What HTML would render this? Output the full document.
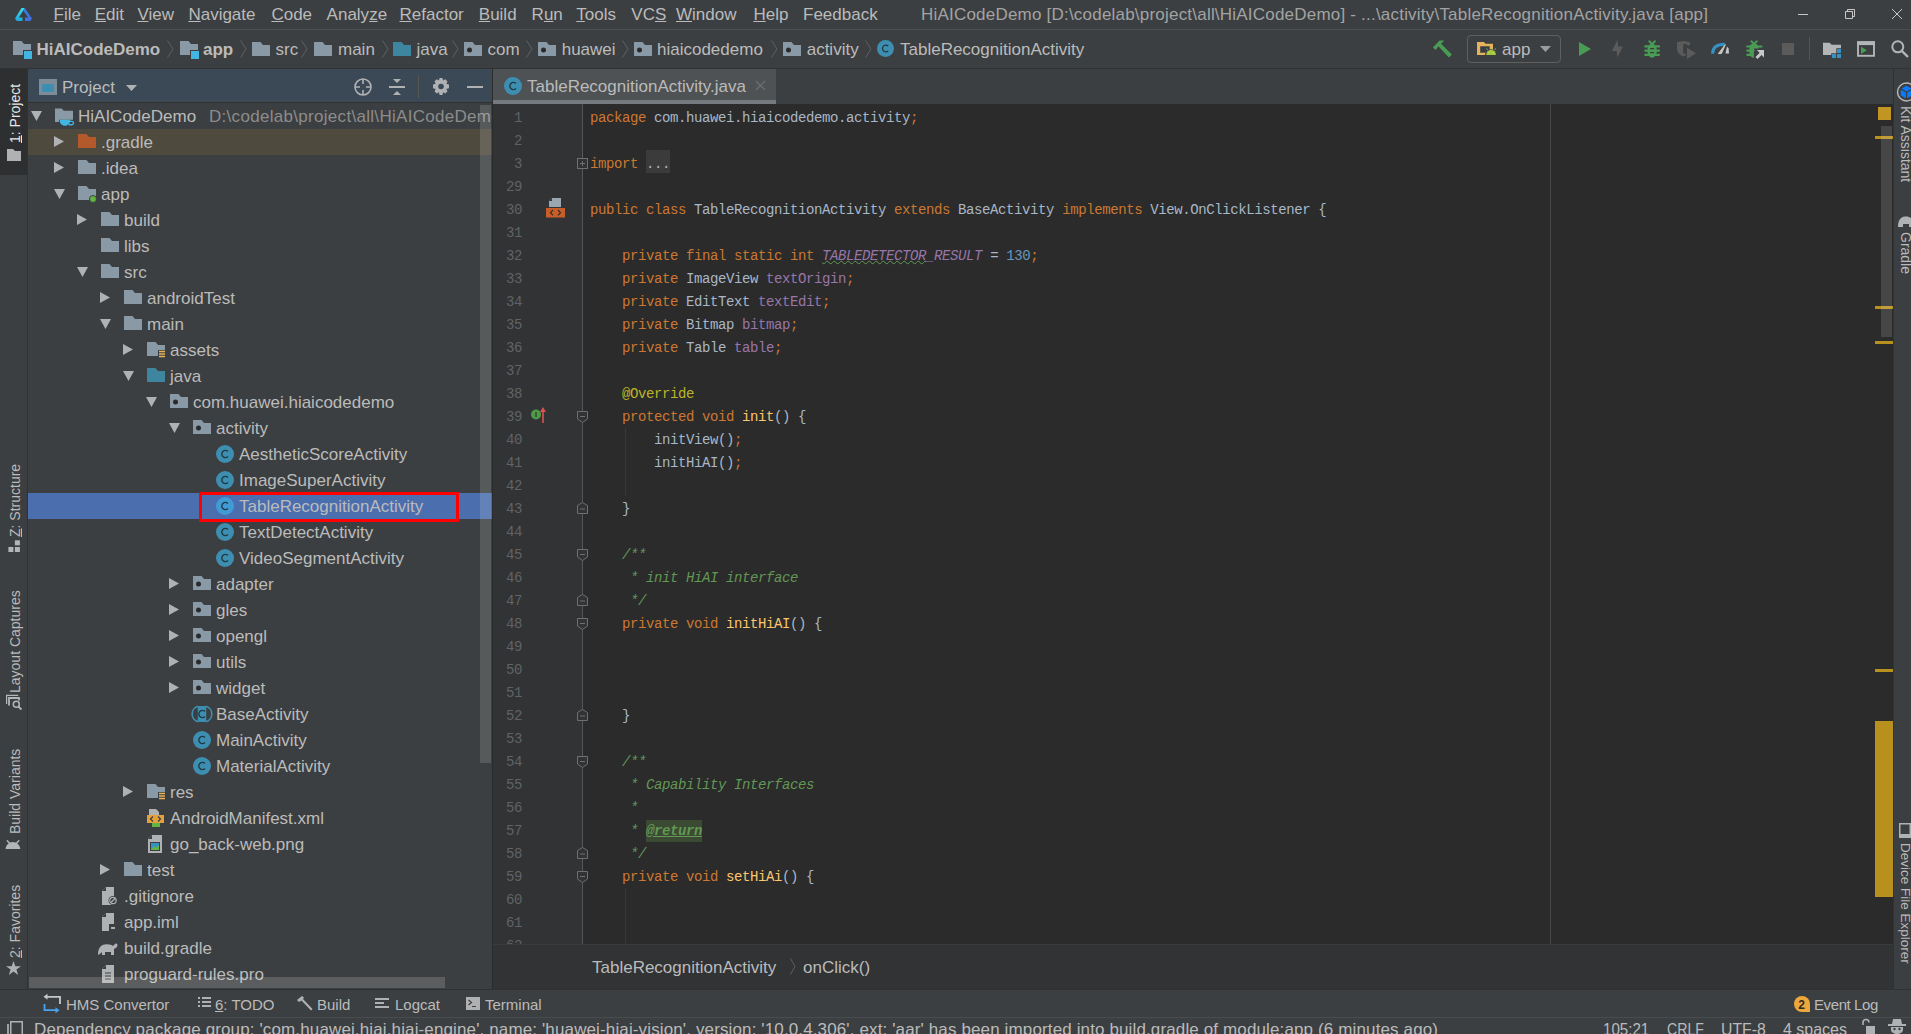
<!DOCTYPE html>
<html><head><meta charset="utf-8">
<style>
*{box-sizing:border-box;}
html,body{margin:0;padding:0;}
body{width:1911px;height:1034px;overflow:hidden;position:relative;background:#3C3F41;font-family:"Liberation Sans",sans-serif;color:#BBBBBB;font-size:17px;}
.a{position:absolute;}
.t{position:absolute;white-space:pre;}
.u{text-decoration:underline;text-underline-offset:1px;text-decoration-thickness:1px;}
svg{position:absolute;overflow:visible;}
.code{position:absolute;left:590px;font-family:"Liberation Mono",monospace;font-size:14px;letter-spacing:-0.4px;line-height:23px;white-space:pre;color:#A9B7C6;}
.ln{position:absolute;left:480px;width:42px;text-align:right;font-family:"Liberation Mono",monospace;font-size:14px;letter-spacing:-0.4px;line-height:23px;color:#606366;white-space:pre;}
.k{color:#CC7832;}
.f{color:#9876AA;font-style:italic;}
.fi{color:#9876AA;}
.n{color:#6897BB;}
.an{color:#BBB529;}
.dc{color:#629755;font-style:italic;}
.md{color:#FFC66D;}
.vt{position:absolute;white-space:pre;transform-origin:0 0;transform:rotate(-90deg);font-size:14px;line-height:16px;color:#BBBBBB;}
.vtr{position:absolute;white-space:pre;transform-origin:0 0;transform:rotate(90deg);font-size:14px;line-height:16px;color:#BBBBBB;}
</style></head><body>

<div class="a" style="left:0;top:29px;width:1911px;height:1px;background:#4F4F4F;"></div>
<svg style="left:15px;top:8px" width="17" height="13" viewBox="0 0 17 13"><defs><linearGradient id="lg1" x1="0" y1="0" x2="0" y2="1"><stop offset="0" stop-color="#3BE0E8"/><stop offset="1" stop-color="#1FA8DC"/></linearGradient><linearGradient id="lg2" x1="0" y1="0" x2="1" y2="1"><stop offset="0" stop-color="#2F7FE0"/><stop offset="1" stop-color="#4A6BE0"/></linearGradient></defs><path d="M6.5 0H9.8L3.8 9.5H7.5V13H1.8L0 10.5Z" fill="url(#lg1)"/><path d="M9.8 0L17 10.5L15.2 13H10V9.5H13.2L8.2 2.5Z" fill="url(#lg2)"/></svg>
<div class="t" style="left:53.5px;top:5px;font-size:17px;color:#BBBBBB;font-weight:400;line-height:20px;"><span class="u">F</span>ile</div>
<div class="t" style="left:94.7px;top:5px;font-size:17px;color:#BBBBBB;font-weight:400;line-height:20px;"><span class="u">E</span>dit</div>
<div class="t" style="left:137.4px;top:5px;font-size:17px;color:#BBBBBB;font-weight:400;line-height:20px;"><span class="u">V</span>iew</div>
<div class="t" style="left:188.4px;top:5px;font-size:17px;color:#BBBBBB;font-weight:400;line-height:20px;"><span class="u">N</span>avigate</div>
<div class="t" style="left:271.4px;top:5px;font-size:17px;color:#BBBBBB;font-weight:400;line-height:20px;"><span class="u">C</span>ode</div>
<div class="t" style="left:326.6px;top:5px;font-size:17px;color:#BBBBBB;font-weight:400;line-height:20px;">Analy<span class="u">z</span>e</div>
<div class="t" style="left:399.5px;top:5px;font-size:17px;color:#BBBBBB;font-weight:400;line-height:20px;"><span class="u">R</span>efactor</div>
<div class="t" style="left:478.8px;top:5px;font-size:17px;color:#BBBBBB;font-weight:400;line-height:20px;"><span class="u">B</span>uild</div>
<div class="t" style="left:531.6px;top:5px;font-size:17px;color:#BBBBBB;font-weight:400;line-height:20px;">R<span class="u">u</span>n</div>
<div class="t" style="left:576.3px;top:5px;font-size:17px;color:#BBBBBB;font-weight:400;line-height:20px;"><span class="u">T</span>ools</div>
<div class="t" style="left:631.3px;top:5px;font-size:17px;color:#BBBBBB;font-weight:400;line-height:20px;">VC<span class="u">S</span></div>
<div class="t" style="left:676px;top:5px;font-size:17px;color:#BBBBBB;font-weight:400;line-height:20px;"><span class="u">W</span>indow</div>
<div class="t" style="left:753.4px;top:5px;font-size:17px;color:#BBBBBB;font-weight:400;line-height:20px;"><span class="u">H</span>elp</div>
<div class="t" style="left:803px;top:5px;font-size:17px;color:#BBBBBB;font-weight:400;line-height:20px;">Feedback</div>
<div class="t" style="left:921px;top:5px;font-size:17px;color:#A3A3A3;font-weight:400;line-height:20px;letter-spacing:0.21px;">HiAICodeDemo [D:\codelab\project\all\HiAICodeDemo] - ...\activity\TableRecognitionActivity.java [app]</div>
<div class="a" style="left:1798px;top:14px;width:10px;height:1px;background:#C8C8C8;"></div>
<svg style="left:1845px;top:9px" width="10" height="10" viewBox="0 0 10 10"><path d="M0.5 2.5H7.5V9.5H0.5Z M2.5 2.5V0.5H9.5V7.5H7.5" stroke="#C8C8C8" stroke-width="1" fill="none"/></svg>
<svg style="left:1892px;top:9px" width="10" height="10" viewBox="0 0 10 10"><path d="M0 0L10 10M10 0L0 10" stroke="#C8C8C8" stroke-width="1"/></svg>
<div class="a" style="left:0;top:68px;width:1911px;height:1px;background:#323232;"></div>
<svg style="left:13px;top:41px" width="18" height="14" viewBox="0 0 18 14"><path d="M0 0H8.5L11 3H18V14H0Z" fill="#8A99A6"/></svg><div class="a" style="left:23px;top:50px;width:10px;height:10px;background:#3C3F41;"></div><div class="a" style="left:24px;top:51px;width:8px;height:8px;background:#40B6E0;"></div>
<div class="t" style="left:36.5px;top:40px;font-size:17px;color:#BBBBBB;font-weight:700;line-height:20px;">HiAICodeDemo</div>
<svg style="left:167px;top:40px" width="7" height="18" viewBox="0 0 7 18"><path d="M0.5 0.5L6 9L0.5 17.5" stroke="#5E6163" stroke-width="1" fill="none"/></svg>
<svg style="left:180px;top:41px" width="18" height="14" viewBox="0 0 18 14"><path d="M0 0H8.5L11 3H18V14H0Z" fill="#8A99A6"/></svg><div class="a" style="left:190px;top:50px;width:10px;height:10px;background:#3C3F41;"></div><div class="a" style="left:191px;top:51px;width:8px;height:8px;background:#40B6E0;"></div>
<div class="t" style="left:203px;top:40px;font-size:17px;color:#BBBBBB;font-weight:700;line-height:20px;">app</div>
<svg style="left:240px;top:40px" width="7" height="18" viewBox="0 0 7 18"><path d="M0.5 0.5L6 9L0.5 17.5" stroke="#5E6163" stroke-width="1" fill="none"/></svg>
<svg style="left:252px;top:42px" width="18" height="14" viewBox="0 0 18 14"><path d="M0 0H8.5L11 3H18V14H0Z" fill="#8A99A6"/></svg>
<div class="t" style="left:275.5px;top:40px;font-size:17px;color:#BBBBBB;font-weight:400;line-height:20px;">src</div>
<svg style="left:301px;top:40px" width="7" height="18" viewBox="0 0 7 18"><path d="M0.5 0.5L6 9L0.5 17.5" stroke="#5E6163" stroke-width="1" fill="none"/></svg>
<svg style="left:314px;top:42px" width="18" height="14" viewBox="0 0 18 14"><path d="M0 0H8.5L11 3H18V14H0Z" fill="#8A99A6"/></svg>
<div class="t" style="left:338px;top:40px;font-size:17px;color:#BBBBBB;font-weight:400;line-height:20px;">main</div>
<svg style="left:382px;top:40px" width="7" height="18" viewBox="0 0 7 18"><path d="M0.5 0.5L6 9L0.5 17.5" stroke="#5E6163" stroke-width="1" fill="none"/></svg>
<svg style="left:393px;top:42px" width="18" height="14" viewBox="0 0 18 14"><path d="M0 0H8.5L11 3H18V14H0Z" fill="#3E86A0"/></svg>
<div class="t" style="left:416.6px;top:40px;font-size:17px;color:#BBBBBB;font-weight:400;line-height:20px;">java</div>
<svg style="left:452px;top:40px" width="7" height="18" viewBox="0 0 7 18"><path d="M0.5 0.5L6 9L0.5 17.5" stroke="#5E6163" stroke-width="1" fill="none"/></svg>
<svg style="left:464px;top:42px" width="18" height="14" viewBox="0 0 18 14"><path d="M0 0H8.5L11 3H18V14H0Z" fill="#8A99A6"/><circle cx="5.5" cy="8" r="2.5" fill="#2B2B2B"/></svg>
<div class="t" style="left:487.6px;top:40px;font-size:17px;color:#BBBBBB;font-weight:400;line-height:20px;">com</div>
<svg style="left:526px;top:40px" width="7" height="18" viewBox="0 0 7 18"><path d="M0.5 0.5L6 9L0.5 17.5" stroke="#5E6163" stroke-width="1" fill="none"/></svg>
<svg style="left:538px;top:42px" width="18" height="14" viewBox="0 0 18 14"><path d="M0 0H8.5L11 3H18V14H0Z" fill="#8A99A6"/><circle cx="5.5" cy="8" r="2.5" fill="#2B2B2B"/></svg>
<div class="t" style="left:561.7px;top:40px;font-size:17px;color:#BBBBBB;font-weight:400;line-height:20px;">huawei</div>
<svg style="left:622px;top:40px" width="7" height="18" viewBox="0 0 7 18"><path d="M0.5 0.5L6 9L0.5 17.5" stroke="#5E6163" stroke-width="1" fill="none"/></svg>
<svg style="left:634px;top:42px" width="18" height="14" viewBox="0 0 18 14"><path d="M0 0H8.5L11 3H18V14H0Z" fill="#8A99A6"/><circle cx="5.5" cy="8" r="2.5" fill="#2B2B2B"/></svg>
<div class="t" style="left:657px;top:40px;font-size:17px;color:#BBBBBB;font-weight:400;line-height:20px;">hiaicodedemo</div>
<svg style="left:771px;top:40px" width="7" height="18" viewBox="0 0 7 18"><path d="M0.5 0.5L6 9L0.5 17.5" stroke="#5E6163" stroke-width="1" fill="none"/></svg>
<svg style="left:783px;top:42px" width="18" height="14" viewBox="0 0 18 14"><path d="M0 0H8.5L11 3H18V14H0Z" fill="#8A99A6"/><circle cx="5.5" cy="8" r="2.5" fill="#2B2B2B"/></svg>
<div class="t" style="left:806.7px;top:40px;font-size:17px;color:#BBBBBB;font-weight:400;line-height:20px;">activity</div>
<svg style="left:865px;top:40px" width="7" height="18" viewBox="0 0 7 18"><path d="M0.5 0.5L6 9L0.5 17.5" stroke="#5E6163" stroke-width="1" fill="none"/></svg>
<svg style="left:877px;top:40px" width="17" height="17" viewBox="0 0 17 17"><circle cx="8.5" cy="8.5" r="8.5" fill="#3D8EB0"/><path d="M11.3 6.1A3.4 3.4 0 1 0 11.3 10.9" stroke="#203A45" stroke-width="1.3" fill="none"/></svg>
<div class="t" style="left:900px;top:40px;font-size:17px;color:#BBBBBB;font-weight:400;line-height:20px;">TableRecognitionActivity</div>
<svg style="left:1433px;top:40px" width="20" height="18" viewBox="0 0 20 18"><path d="M-0.1 7.4L6.6 0.4H11.3L8 3.7L18.9 14.6L15.9 17.6L5.4 6.3L2.7 9.9Z" fill="#499C54"/></svg>
<div class="a" style="left:1467px;top:35px;width:94px;height:28px;border:1px solid #5E6060;border-radius:4px;"></div>
<svg style="left:1477px;top:42px" width="20" height="14" viewBox="0 0 20 14"><path fill-rule="evenodd" d="M0 0H7L8.5 1.8H16V13H0Z M3.2 4.3H12.7V10.7H3.2Z" fill="#E4B35A"/><path d="M8.6 13.3A5.3 5.5 0 0 1 19.2 13.3Z" fill="#3C3F41" stroke="#3C3F41" stroke-width="1.2"/><path d="M9.2 13A4.9 5.2 0 0 1 19 13Z" fill="#A4C639"/><path d="M10.6 8.3L9.6 6.3M17.6 8.3L18.6 6.3" stroke="#5FB87A" stroke-width="0.9"/><circle cx="12.1" cy="10.8" r="0.8" fill="#C8DC8C"/><circle cx="16.2" cy="10.8" r="0.8" fill="#C8DC8C"/></svg>
<div class="t" style="left:1502px;top:40px;font-size:17px;color:#BBBBBB;font-weight:400;line-height:20px;">app</div>
<svg style="left:1540px;top:46px" width="11" height="6" viewBox="0 0 11 6"><path d="M0 0H11L5.5 6Z" fill="#9A9DA0"/></svg>
<svg style="left:1579px;top:42px" width="12" height="14" viewBox="0 0 12 14"><path d="M0 0L12 7L0 14Z" fill="#499C54"/></svg>
<svg style="left:1606px;top:36px" width="30" height="24" viewBox="0 0 30 24"><path d="M11.5 3.9L5.9 15.1H10.7L11.4 21.6L16.9 10.4H12.1Z" fill="#5B5B5B"/></svg>
<svg style="left:1644px;top:40px" width="16" height="18" viewBox="0 0 16 18"><path d="M5.3 1.3L7.6 3.6M10.9 1.3L8.6 3.6" stroke="#499C54" stroke-width="2" stroke-linecap="round"/><ellipse cx="8.1" cy="10.7" rx="4.7" ry="7.1" fill="#499C54"/><path d="M1.2 6.4H15M1.2 10.6H15M1.2 14.8H15" stroke="#499C54" stroke-width="2.2" stroke-linecap="round"/><path d="M6 8.6H10.2M6 12.6H10.2" stroke="#3C3F41" stroke-width="1.2"/></svg>
<svg style="left:1677px;top:41px" width="20" height="19" viewBox="0 0 20 19"><path d="M0 1.3L6.5 0L13 1.3V4.5H10V3H6.2V12.5H8.8V14.3C7.8 14.9 6.8 15.4 6.2 15.4C2.5 14 0 11 0 7.5Z" fill="#5B5B5B"/><path d="M10 6.8L19 12.3L10 18Z" fill="#5B5B5B"/></svg>
<svg style="left:1706px;top:36px" width="30" height="24" viewBox="0 0 30 24"><path d="M6.6 17.8C6.6 12 9.5 8.3 18.8 8.3" stroke="#3592C4" stroke-width="3" fill="none"/><path d="M12.4 17.6L19.3 8.6L15.4 17.6Z" fill="#C8C8C8" stroke="#C8C8C8" stroke-width="1" stroke-linejoin="round"/><path d="M19.5 17.6H23L22.6 12.5L21 10.5Z" fill="#C8C8C8"/></svg>
<svg style="left:1742px;top:36px" width="30" height="24" viewBox="0 0 30 24"><path d="M9.3 5.3L11.7 7.4M14.9 5.3L12.4 7.4" stroke="#499C54" stroke-width="2" stroke-linecap="round"/><path d="M7.4 12.5C7.4 9 9.3 7.4 12 7.4C14.5 7.4 16.5 9 16.6 12.5H11.9V21.8C9 21.8 7.4 19 7.4 15Z" fill="#499C54"/><path d="M5.2 10.5H19.5M5.2 14.6H11.5M5.2 18.8H11" stroke="#499C54" stroke-width="2.2" stroke-linecap="round"/><path d="M14.9 13.9H22V21.6Z" fill="#C8C8C8"/><path d="M14.5 22L19.5 17" stroke="#C8C8C8" stroke-width="3"/></svg>
<div class="a" style="left:1782px;top:43px;width:12px;height:12px;background:#5B5B5B;"></div>
<div class="a" style="left:1809px;top:37px;width:1px;height:23px;background:#515658;"></div>
<svg style="left:1818px;top:36px" width="30" height="24" viewBox="0 0 30 24"><path d="M5 6.7H11.6L13.7 8.8H23V12.3H18.3V17.3H13.2V19H5Z" fill="#B4B5B7"/><rect x="19" y="13" width="4" height="4" fill="#3592C4"/><rect x="13.9" y="18" width="4.1" height="4" fill="#3592C4"/><rect x="19" y="18" width="4" height="4" fill="#3592C4"/></svg>
<svg style="left:1852px;top:36px" width="30" height="24" viewBox="0 0 30 24"><rect x="6" y="6.2" width="16" height="13.6" stroke="#B4B5B7" stroke-width="1.9" fill="none"/><rect x="5.1" y="5.3" width="17.8" height="3.8" fill="#B4B5B7"/><path d="M9 10.7L14.9 14.3L9 17.9Z" fill="#499C54"/></svg>
<svg style="left:1891px;top:40px" width="18" height="18" viewBox="0 0 18 18"><circle cx="6.8" cy="6.8" r="5.5" stroke="#B4B5B7" stroke-width="2" fill="none"/><path d="M10.8 10.8L17 17" stroke="#B4B5B7" stroke-width="2.4"/></svg>
<div class="a" style="left:27px;top:69px;width:1px;height:920px;background:#2F3133;"></div>
<div class="a" style="left:0;top:69px;width:27px;height:106px;background:#2D2F31;"></div>
<div class="vt" style="left:7px;top:143px;"><span style="color:#E8E8E8"><span class="u">1</span>: Project</span></div>
<svg style="left:7px;top:149px" width="14" height="12" viewBox="0 0 14 12"><path d="M0 0H6L8 2H14V12H0Z" fill="#AFB1B3"/></svg>
<div class="vt" style="left:7px;top:537px;"><span class="u">Z</span>: Structure</div>
<svg style="left:0px;top:530px" width="28" height="30" viewBox="0 0 28 30"><rect x="14.9" y="10.3" width="5" height="5" fill="#B4B5B7"/><rect x="8.4" y="17" width="5" height="5" fill="#B4B5B7"/><rect x="14.9" y="17" width="5" height="5" fill="#B4B5B7"/></svg>
<div class="vt" style="left:7px;top:693px;">Layout Captures</div>
<svg style="left:0px;top:688px" width="28" height="28" viewBox="0 0 28 28"><path d="M6.6 16V7.3H18.2" stroke="#B4B5B7" stroke-width="1.2" fill="none"/><path d="M9 17.5V10H19V12.5" stroke="#B4B5B7" stroke-width="1.8" fill="none"/><circle cx="16.3" cy="16.3" r="3" stroke="#B4B5B7" stroke-width="1.5" fill="#3C3F41"/><path d="M18.3 18.5L21.5 21.5" stroke="#B4B5B7" stroke-width="1.8"/></svg>
<div class="vt" style="left:7px;top:834px;">Build Variants</div>
<svg style="left:0px;top:832px" width="28" height="26" viewBox="0 0 28 26"><path d="M5.5 17C6 13 9 10 12.9 10C16.8 10 19.8 13 20.3 17Z" fill="#B4B5B7"/><path d="M7.3 8.7L9.6 11.2M18.8 8.7L16.4 11.2" stroke="#B4B5B7" stroke-width="1.5" stroke-linecap="round"/></svg>
<div class="vt" style="left:7px;top:958px;"><span class="u">2</span>: Favorites</div>
<svg style="left:6px;top:961px" width="15" height="15" viewBox="0 0 15 15"><path d="M7.5 0L9.3 5.2H15L10.4 8.5L12.2 14L7.5 10.6L2.8 14L4.6 8.5L0 5.2H5.7Z" fill="#AFB1B3"/></svg>
<div class="a" style="left:28px;top:69px;width:464px;height:33px;background:#3B4856;"></div>
<div class="a" style="left:28px;top:102px;width:464px;height:1px;background:#323232;"></div>
<div class="a" style="left:492px;top:69px;width:1px;height:920px;background:#2B2B2B;"></div>
<svg style="left:39px;top:79px" width="18" height="16" viewBox="0 0 18 16"><rect x="0.8" y="0.8" width="16.4" height="14.4" stroke="#7E8C98" stroke-width="1.6" fill="#7E8C98"/><rect x="3" y="5" width="12" height="8" fill="#3D8EB0"/></svg>
<div class="t" style="left:62px;top:78px;font-size:17px;color:#BBBBBB;font-weight:400;line-height:20px;">Project</div>
<svg style="left:126px;top:85px" width="11" height="6" viewBox="0 0 11 6"><path d="M0 0H11L5.5 6Z" fill="#AFB1B3"/></svg>
<svg style="left:354px;top:78px" width="18" height="18" viewBox="0 0 18 18"><circle cx="9" cy="9" r="8" stroke="#AFB1B3" stroke-width="1.6" fill="none"/><path d="M9 1V6M9 12V17M1 9H6M12 9H17" stroke="#AFB1B3" stroke-width="1.6"/></svg>
<svg style="left:389px;top:79px" width="16" height="16" viewBox="0 0 16 16"><path d="M4 0H12L8 4Z M4 16H12L8 12Z" fill="#AFB1B3"/><rect x="0" y="7" width="16" height="2" fill="#AFB1B3"/></svg>
<div class="a" style="left:418px;top:75px;width:1px;height:23px;background:#5A5650;"></div>
<svg style="left:433px;top:78px" width="16" height="17" viewBox="0 0 16 17"><path d="M6.5 0H9.5L10 2.5L12.3 1.2L14.5 3.5L13.3 5.8L16 6.5V10.2L13.3 11L14.5 13.3L12.3 15.5L10 14.3L9.5 17H6.5L6 14.3L3.7 15.5L1.5 13.3L2.7 11L0 10.2V6.5L2.7 5.8L1.5 3.5L3.7 1.2L6 2.5Z" fill="#AFB1B3"/><circle cx="8" cy="8.5" r="2.8" fill="#3B4856"/></svg>
<div class="a" style="left:467px;top:86px;width:16px;height:2px;background:#AFB1B3;"></div>
<div class="a" style="left:28px;top:103px;width:464px;height:886px;overflow:hidden;">
<div class="a" style="left:0;top:26px;width:464px;height:26px;background:#4E4A3E;"></div><div class="a" style="left:0;top:390px;width:464px;height:26px;background:#4B6EAF;"></div><svg style="left:3px;top:8px" width="11" height="10" viewBox="0 0 11 10"><path d="M0 0H11L5.5 10Z" fill="#AFB1B3"/></svg><svg style="left:22px;top:1px" width="30" height="24" viewBox="0 0 30 24"><path d="M5 4.4H11.6L13.8 6.8H23V15.8H9V17.9H5Z" fill="#8A99A6"/><path d="M9.75 15.8H20.2V17C20.2 20 17.5 21.8 15 21.8C12.5 21.8 9.75 20 9.75 17Z" fill="#40B6E0"/><path d="M19.5 17.4H21.8A1.7 1.7 0 0 1 21.8 20.8H18.8" stroke="#40B6E0" stroke-width="1.4" fill="none"/></svg><div class="t" style="left:50px;top:1px;line-height:26px;">HiAICodeDemo</div><div class="t" style="left:181px;top:1px;line-height:26px;color:#8C8C8C;letter-spacing:0.3px;">D:\codelab\project\all\HiAICodeDemo</div><svg style="left:26px;top:33px" width="10" height="11" viewBox="0 0 10 11"><path d="M0 0L10 5.5L0 11Z" fill="#AFB1B3"/></svg><svg style="left:50px;top:31px" width="18" height="14" viewBox="0 0 18 14"><path d="M0 0H8.5L11 3H18V14H0Z" fill="#B4592C"/></svg><div class="t" style="left:73px;top:27px;line-height:26px;">.gradle</div><svg style="left:26px;top:59px" width="10" height="11" viewBox="0 0 10 11"><path d="M0 0L10 5.5L0 11Z" fill="#AFB1B3"/></svg><svg style="left:50px;top:57px" width="18" height="14" viewBox="0 0 18 14"><path d="M0 0H8.5L11 3H18V14H0Z" fill="#8A99A6"/></svg><div class="t" style="left:73px;top:53px;line-height:26px;">.idea</div><svg style="left:26px;top:86px" width="11" height="10" viewBox="0 0 11 10"><path d="M0 0H11L5.5 10Z" fill="#AFB1B3"/></svg><svg style="left:50px;top:83px" width="18" height="14" viewBox="0 0 18 14"><path d="M0 0H8.5L11 3H18V14H0Z" fill="#8A99A6"/></svg><svg style="left:61px;top:92px" width="8" height="8" viewBox="0 0 8 8"><circle cx="4" cy="4" r="3.5" fill="#62B543" stroke="#3C3F41" stroke-width="1"/></svg><div class="t" style="left:73px;top:79px;line-height:26px;">app</div><svg style="left:49px;top:111px" width="10" height="11" viewBox="0 0 10 11"><path d="M0 0L10 5.5L0 11Z" fill="#AFB1B3"/></svg><svg style="left:73px;top:109px" width="18" height="14" viewBox="0 0 18 14"><path d="M0 0H8.5L11 3H18V14H0Z" fill="#8A99A6"/></svg><div class="t" style="left:96px;top:105px;line-height:26px;">build</div><svg style="left:73px;top:135px" width="18" height="14" viewBox="0 0 18 14"><path d="M0 0H8.5L11 3H18V14H0Z" fill="#8A99A6"/></svg><div class="t" style="left:96px;top:131px;line-height:26px;">libs</div><svg style="left:49px;top:164px" width="11" height="10" viewBox="0 0 11 10"><path d="M0 0H11L5.5 10Z" fill="#AFB1B3"/></svg><svg style="left:73px;top:161px" width="18" height="14" viewBox="0 0 18 14"><path d="M0 0H8.5L11 3H18V14H0Z" fill="#8A99A6"/></svg><div class="t" style="left:96px;top:157px;line-height:26px;">src</div><svg style="left:72px;top:189px" width="10" height="11" viewBox="0 0 10 11"><path d="M0 0L10 5.5L0 11Z" fill="#AFB1B3"/></svg><svg style="left:96px;top:187px" width="18" height="14" viewBox="0 0 18 14"><path d="M0 0H8.5L11 3H18V14H0Z" fill="#8A99A6"/></svg><div class="t" style="left:119px;top:183px;line-height:26px;">androidTest</div><svg style="left:72px;top:216px" width="11" height="10" viewBox="0 0 11 10"><path d="M0 0H11L5.5 10Z" fill="#AFB1B3"/></svg><svg style="left:96px;top:213px" width="18" height="14" viewBox="0 0 18 14"><path d="M0 0H8.5L11 3H18V14H0Z" fill="#8A99A6"/></svg><div class="t" style="left:119px;top:209px;line-height:26px;">main</div><svg style="left:95px;top:241px" width="10" height="11" viewBox="0 0 10 11"><path d="M0 0L10 5.5L0 11Z" fill="#AFB1B3"/></svg><svg style="left:119px;top:239px" width="18" height="14" viewBox="0 0 18 14"><path d="M0 0H8.5L11 3H18V14H0Z" fill="#8A99A6"/></svg><svg style="left:130px;top:247px" width="8" height="9" viewBox="0 0 8 9"><rect x="0" y="0" width="8" height="9" fill="#3C3F41"/><path d="M1 1.5H7M1 4H7M1 6.5H7" stroke="#E4B35A" stroke-width="1.3"/></svg><div class="t" style="left:142px;top:235px;line-height:26px;">assets</div><svg style="left:95px;top:268px" width="11" height="10" viewBox="0 0 11 10"><path d="M0 0H11L5.5 10Z" fill="#AFB1B3"/></svg><svg style="left:119px;top:265px" width="18" height="14" viewBox="0 0 18 14"><path d="M0 0H8.5L11 3H18V14H0Z" fill="#3E86A0"/></svg><div class="t" style="left:142px;top:261px;line-height:26px;">java</div><svg style="left:118px;top:294px" width="11" height="10" viewBox="0 0 11 10"><path d="M0 0H11L5.5 10Z" fill="#AFB1B3"/></svg><svg style="left:142px;top:291px" width="18" height="14" viewBox="0 0 18 14"><path d="M0 0H8.5L11 3H18V14H0Z" fill="#8A99A6"/><circle cx="5.5" cy="8" r="2.5" fill="#2B2B2B"/></svg><div class="t" style="left:165px;top:287px;line-height:26px;">com.huawei.hiaicodedemo</div><svg style="left:141px;top:320px" width="11" height="10" viewBox="0 0 11 10"><path d="M0 0H11L5.5 10Z" fill="#AFB1B3"/></svg><svg style="left:165px;top:317px" width="18" height="14" viewBox="0 0 18 14"><path d="M0 0H8.5L11 3H18V14H0Z" fill="#8A99A6"/><circle cx="5.5" cy="8" r="2.5" fill="#2B2B2B"/></svg><div class="t" style="left:188px;top:313px;line-height:26px;">activity</div><svg style="left:188px;top:342px" width="18" height="18" viewBox="0 0 17 17"><circle cx="8.5" cy="8.5" r="8.5" fill="#3D8EB0"/><path d="M11.3 6.1A3.4 3.4 0 1 0 11.3 10.9" stroke="#203A45" stroke-width="1.3" fill="none"/></svg><div class="t" style="left:211px;top:339px;line-height:26px;">AestheticScoreActivity</div><svg style="left:188px;top:368px" width="18" height="18" viewBox="0 0 17 17"><circle cx="8.5" cy="8.5" r="8.5" fill="#3D8EB0"/><path d="M11.3 6.1A3.4 3.4 0 1 0 11.3 10.9" stroke="#203A45" stroke-width="1.3" fill="none"/></svg><div class="t" style="left:211px;top:365px;line-height:26px;">ImageSuperActivity</div><svg style="left:188px;top:394px" width="18" height="18" viewBox="0 0 17 17"><circle cx="8.5" cy="8.5" r="8.5" fill="#419BD4"/><path d="M11.3 6.1A3.4 3.4 0 1 0 11.3 10.9" stroke="#203A45" stroke-width="1.3" fill="none"/></svg><div class="t" style="left:211px;top:391px;line-height:26px;">TableRecognitionActivity</div><svg style="left:188px;top:420px" width="18" height="18" viewBox="0 0 17 17"><circle cx="8.5" cy="8.5" r="8.5" fill="#3D8EB0"/><path d="M11.3 6.1A3.4 3.4 0 1 0 11.3 10.9" stroke="#203A45" stroke-width="1.3" fill="none"/></svg><div class="t" style="left:211px;top:417px;line-height:26px;">TextDetectActivity</div><svg style="left:188px;top:446px" width="18" height="18" viewBox="0 0 17 17"><circle cx="8.5" cy="8.5" r="8.5" fill="#3D8EB0"/><path d="M11.3 6.1A3.4 3.4 0 1 0 11.3 10.9" stroke="#203A45" stroke-width="1.3" fill="none"/></svg><div class="t" style="left:211px;top:443px;line-height:26px;">VideoSegmentActivity</div><svg style="left:141px;top:475px" width="10" height="11" viewBox="0 0 10 11"><path d="M0 0L10 5.5L0 11Z" fill="#AFB1B3"/></svg><svg style="left:165px;top:473px" width="18" height="14" viewBox="0 0 18 14"><path d="M0 0H8.5L11 3H18V14H0Z" fill="#8A99A6"/><circle cx="5.5" cy="8" r="2.5" fill="#2B2B2B"/></svg><div class="t" style="left:188px;top:469px;line-height:26px;">adapter</div><svg style="left:141px;top:501px" width="10" height="11" viewBox="0 0 10 11"><path d="M0 0L10 5.5L0 11Z" fill="#AFB1B3"/></svg><svg style="left:165px;top:499px" width="18" height="14" viewBox="0 0 18 14"><path d="M0 0H8.5L11 3H18V14H0Z" fill="#8A99A6"/><circle cx="5.5" cy="8" r="2.5" fill="#2B2B2B"/></svg><div class="t" style="left:188px;top:495px;line-height:26px;">gles</div><svg style="left:141px;top:527px" width="10" height="11" viewBox="0 0 10 11"><path d="M0 0L10 5.5L0 11Z" fill="#AFB1B3"/></svg><svg style="left:165px;top:525px" width="18" height="14" viewBox="0 0 18 14"><path d="M0 0H8.5L11 3H18V14H0Z" fill="#8A99A6"/><circle cx="5.5" cy="8" r="2.5" fill="#2B2B2B"/></svg><div class="t" style="left:188px;top:521px;line-height:26px;">opengl</div><svg style="left:141px;top:553px" width="10" height="11" viewBox="0 0 10 11"><path d="M0 0L10 5.5L0 11Z" fill="#AFB1B3"/></svg><svg style="left:165px;top:551px" width="18" height="14" viewBox="0 0 18 14"><path d="M0 0H8.5L11 3H18V14H0Z" fill="#8A99A6"/><circle cx="5.5" cy="8" r="2.5" fill="#2B2B2B"/></svg><div class="t" style="left:188px;top:547px;line-height:26px;">utils</div><svg style="left:141px;top:579px" width="10" height="11" viewBox="0 0 10 11"><path d="M0 0L10 5.5L0 11Z" fill="#AFB1B3"/></svg><svg style="left:165px;top:577px" width="18" height="14" viewBox="0 0 18 14"><path d="M0 0H8.5L11 3H18V14H0Z" fill="#8A99A6"/><circle cx="5.5" cy="8" r="2.5" fill="#2B2B2B"/></svg><div class="t" style="left:188px;top:573px;line-height:26px;">widget</div><svg style="left:165px;top:602px" width="18" height="18" viewBox="0 0 17 17"><path d="M5 1.2A7.5 7.5 0 0 0 5 15.8" stroke="#3D8EB0" stroke-width="1.6" fill="none"/><path d="M12 1.2A7.5 7.5 0 0 1 12 15.8" stroke="#3D8EB0" stroke-width="1.6" fill="none"/><rect x="4.5" y="1" width="8" height="15" fill="#3D8EB0"/><path d="M11.3 6.1A3.4 3.4 0 1 0 11.3 10.9" stroke="#203A45" stroke-width="1.3" fill="none"/></svg><div class="t" style="left:188px;top:599px;line-height:26px;">BaseActivity</div><svg style="left:165px;top:628px" width="18" height="18" viewBox="0 0 17 17"><circle cx="8.5" cy="8.5" r="8.5" fill="#3D8EB0"/><path d="M11.3 6.1A3.4 3.4 0 1 0 11.3 10.9" stroke="#203A45" stroke-width="1.3" fill="none"/></svg><div class="t" style="left:188px;top:625px;line-height:26px;">MainActivity</div><svg style="left:165px;top:654px" width="18" height="18" viewBox="0 0 17 17"><circle cx="8.5" cy="8.5" r="8.5" fill="#3D8EB0"/><path d="M11.3 6.1A3.4 3.4 0 1 0 11.3 10.9" stroke="#203A45" stroke-width="1.3" fill="none"/></svg><div class="t" style="left:188px;top:651px;line-height:26px;">MaterialActivity</div><svg style="left:95px;top:683px" width="10" height="11" viewBox="0 0 10 11"><path d="M0 0L10 5.5L0 11Z" fill="#AFB1B3"/></svg><svg style="left:119px;top:681px" width="18" height="14" viewBox="0 0 18 14"><path d="M0 0H8.5L11 3H18V14H0Z" fill="#8A99A6"/></svg><svg style="left:130px;top:689px" width="8" height="9" viewBox="0 0 8 9"><rect x="0" y="0" width="8" height="9" fill="#3C3F41"/><path d="M1 1.5H7M1 4H7M1 6.5H7" stroke="#E4B35A" stroke-width="1.3"/></svg><div class="t" style="left:142px;top:677px;line-height:26px;">res</div><svg style="left:119px;top:706px" width="18" height="18" viewBox="0 0 18 18"><path d="M2 0H9L12 3V6H2Z" fill="#AFB1B3"/><rect x="0" y="6" width="17" height="8" fill="#E4A03A"/><path d="M6 7.5L3.5 10L6 12.5M11 7.5L13.5 10L11 12.5" stroke="#3C3F41" stroke-width="1.2" fill="none"/><path d="M5 18A4 4 0 0 1 13 18Z" fill="#62B543"/><rect x="5" y="14" width="8" height="4" fill="#62B543"/></svg><div class="t" style="left:142px;top:703px;line-height:26px;">AndroidManifest.xml</div><svg style="left:120px;top:732px" width="14" height="18" viewBox="0 0 14 18"><path d="M4 0H14V18H0V4Z" fill="#AFB1B3"/><path d="M0 4H4V0Z" fill="#3C3F41"/><rect x="2" y="7" width="10" height="9" fill="#3C3F41"/><rect x="3" y="8" width="8" height="7" fill="#3592C4"/><path d="M3 15L6 11L8 13L11 10V15Z" fill="#62B543"/></svg><div class="t" style="left:142px;top:729px;line-height:26px;">go_back-web.png</div><svg style="left:72px;top:761px" width="10" height="11" viewBox="0 0 10 11"><path d="M0 0L10 5.5L0 11Z" fill="#AFB1B3"/></svg><svg style="left:96px;top:759px" width="18" height="14" viewBox="0 0 18 14"><path d="M0 0H8.5L11 3H18V14H0Z" fill="#8A99A6"/></svg><div class="t" style="left:119px;top:755px;line-height:26px;">test</div><svg style="left:74px;top:784px" width="16" height="18" viewBox="0 0 16 18"><path d="M4 0H12V18H0V4Z" fill="#AFB1B3"/><path d="M0 4H4V0Z" fill="#3C3F41"/><circle cx="11" cy="13.5" r="4.5" fill="#3C3F41"/><circle cx="11" cy="13.5" r="3.2" stroke="#AFB1B3" stroke-width="1.2" fill="none"/><path d="M9 15.5L13 11.5" stroke="#AFB1B3" stroke-width="1.2"/></svg><div class="t" style="left:96px;top:781px;line-height:26px;">.gitignore</div><svg style="left:74px;top:810px" width="16" height="18" viewBox="0 0 16 18"><path d="M4 0H12V18H0V4Z" fill="#AFB1B3"/><path d="M0 4H4V0Z" fill="#3C3F41"/><rect x="7" y="11" width="7" height="7" fill="#3C3F41"/><rect x="9" y="14" width="4" height="2" fill="#AFB1B3"/></svg><div class="t" style="left:96px;top:807px;line-height:26px;">app.iml</div><svg style="left:70px;top:838px" width="20" height="14" viewBox="0 0 20 14"><path d="M0 14C0 8 2 4 7 3.5C11 3 14 4 15 5L17 3C18 2 19.5 2.5 19.5 4C19.5 6 18 7 16 8V14H13V11H7V14H4V11C3 12 2 13 0 14Z" fill="#AFB1B3"/></svg><div class="t" style="left:96px;top:833px;line-height:26px;">build.gradle</div><svg style="left:74px;top:862px" width="16" height="18" viewBox="0 0 16 18"><path d="M4 0H12V18H0V4Z" fill="#AFB1B3"/><path d="M0 4H4V0Z" fill="#3C3F41"/><path d="M3 8H9M3 11H9M3 14H9" stroke="#3C3F41" stroke-width="1"/></svg><div class="t" style="left:96px;top:859px;line-height:26px;">proguard-rules.pro</div>
<div class="a" style="left:452px;top:2px;width:11px;height:658px;background:rgba(255,255,255,0.14);"></div>
<div class="a" style="left:1px;top:874px;width:416px;height:11px;background:rgba(255,255,255,0.16);"></div>
</div>
<div class="a" style="left:199px;top:492px;width:260px;height:30px;border:3px solid #FF0000;"></div>
<div class="a" style="left:493px;top:69px;width:1400px;height:35px;background:#3C3F41;"></div>
<div class="a" style="left:493px;top:69px;width:283px;height:31px;background:#4E5254;"></div>
<div class="a" style="left:493px;top:100px;width:283px;height:4px;background:#747A80;"></div>
<svg style="left:504px;top:77px" width="18" height="18" viewBox="0 0 17 17"><circle cx="8.5" cy="8.5" r="8.5" fill="#3D8EB0"/><path d="M11.3 6.1A3.4 3.4 0 1 0 11.3 10.9" stroke="#203A45" stroke-width="1.3" fill="none"/></svg>
<div class="t" style="left:527px;top:77px;font-size:17px;color:#BBBBBB;font-weight:400;line-height:20px;">TableRecognitionActivity.java</div>
<svg style="left:756px;top:81px" width="9" height="9" viewBox="0 0 9 9"><path d="M0 0L9 9M9 0L0 9" stroke="#6E7173" stroke-width="1.2"/></svg>
<div class="a" style="left:493px;top:104px;width:90px;height:840px;background:#313335;"></div>
<div class="a" style="left:583px;top:104px;width:1310px;height:840px;background:#2B2B2B;"></div>
<div class="a" style="left:493px;top:104px;width:1400px;height:840px;overflow:hidden;">
<div class="a" style="left:89px;top:0;width:1px;height:840px;background:#555759;"></div><div class="a" style="left:1057px;top:0;width:1px;height:840px;background:#474747;"></div><div class="a" style="left:132px;top:324px;width:1px;height:68px;background:#393939;"></div><div class="a" style="left:132px;top:784px;width:1px;height:60px;background:#393939;"></div><div class="ln" style="left:-13px;top:2.799999999999997px;">1</div><div class="code" style="left:97px;top:2.799999999999997px;"><span class="k">package</span> com.huawei.hiaicodedemo.activity<span class="k">;</span></div><div class="ln" style="left:-13px;top:25.80000000000001px;">2</div><div class="ln" style="left:-13px;top:48.80000000000001px;">3</div><div class="code" style="left:97px;top:48.80000000000001px;"><span class="k">import</span> <span style="background:#3B3B3B;padding:6px 0 1px;">...</span></div><div class="ln" style="left:-13px;top:71.80000000000001px;">29</div><div class="ln" style="left:-13px;top:94.80000000000001px;">30</div><div class="code" style="left:97px;top:94.80000000000001px;"><span class="k">public class</span> TableRecognitionActivity <span class="k">extends</span> BaseActivity <span class="k">implements</span> View.OnClickListener {</div><div class="ln" style="left:-13px;top:117.80000000000001px;">31</div><div class="ln" style="left:-13px;top:140.8px;">32</div><div class="code" style="left:97px;top:140.8px;">    <span class="k">private final static int</span> <span class="f" style="text-decoration:underline wavy #629755;text-decoration-thickness:1px;text-underline-offset:0px;">TABLEDETECTOR</span><span class="f">_RESULT</span> = <span class="n">130</span><span class="k">;</span></div><div class="ln" style="left:-13px;top:163.8px;">33</div><div class="code" style="left:97px;top:163.8px;">    <span class="k">private</span> ImageView <span class="fi">textOrigin</span><span class="k">;</span></div><div class="ln" style="left:-13px;top:186.8px;">34</div><div class="code" style="left:97px;top:186.8px;">    <span class="k">private</span> EditText <span class="fi">textEdit</span><span class="k">;</span></div><div class="ln" style="left:-13px;top:209.8px;">35</div><div class="code" style="left:97px;top:209.8px;">    <span class="k">private</span> Bitmap <span class="fi">bitmap</span><span class="k">;</span></div><div class="ln" style="left:-13px;top:232.8px;">36</div><div class="code" style="left:97px;top:232.8px;">    <span class="k">private</span> Table <span class="fi">table</span><span class="k">;</span></div><div class="ln" style="left:-13px;top:255.8px;">37</div><div class="ln" style="left:-13px;top:278.8px;">38</div><div class="code" style="left:97px;top:278.8px;">    <span class="an">@Override</span></div><div class="ln" style="left:-13px;top:301.8px;">39</div><div class="code" style="left:97px;top:301.8px;">    <span class="k">protected void</span> <span class="md">init</span>() {</div><div class="ln" style="left:-13px;top:324.8px;">40</div><div class="code" style="left:97px;top:324.8px;">        initView()<span class="k">;</span></div><div class="ln" style="left:-13px;top:347.8px;">41</div><div class="code" style="left:97px;top:347.8px;">        initHiAI()<span class="k">;</span></div><div class="ln" style="left:-13px;top:370.8px;">42</div><div class="ln" style="left:-13px;top:393.8px;">43</div><div class="code" style="left:97px;top:393.8px;">    }</div><div class="ln" style="left:-13px;top:416.79999999999995px;">44</div><div class="ln" style="left:-13px;top:439.79999999999995px;">45</div><div class="code" style="left:97px;top:439.79999999999995px;">    <span class="dc">/**</span></div><div class="ln" style="left:-13px;top:462.79999999999995px;">46</div><div class="code" style="left:97px;top:462.79999999999995px;"><span class="dc">     * init HiAI interface</span></div><div class="ln" style="left:-13px;top:485.79999999999995px;">47</div><div class="code" style="left:97px;top:485.79999999999995px;"><span class="dc">     */</span></div><div class="ln" style="left:-13px;top:508.79999999999995px;">48</div><div class="code" style="left:97px;top:508.79999999999995px;">    <span class="k">private void</span> <span class="md">initHiAI</span>() {</div><div class="ln" style="left:-13px;top:531.8px;">49</div><div class="ln" style="left:-13px;top:554.8px;">50</div><div class="ln" style="left:-13px;top:577.8px;">51</div><div class="ln" style="left:-13px;top:600.8px;">52</div><div class="code" style="left:97px;top:600.8px;">    }</div><div class="ln" style="left:-13px;top:623.8px;">53</div><div class="ln" style="left:-13px;top:646.8px;">54</div><div class="code" style="left:97px;top:646.8px;">    <span class="dc">/**</span></div><div class="ln" style="left:-13px;top:669.8px;">55</div><div class="code" style="left:97px;top:669.8px;"><span class="dc">     * Capability Interfaces</span></div><div class="ln" style="left:-13px;top:692.8px;">56</div><div class="code" style="left:97px;top:692.8px;"><span class="dc">     *</span></div><div class="ln" style="left:-13px;top:715.8px;">57</div><div class="code" style="left:97px;top:715.8px;"><span class="dc">     * </span><span class="dc" style="background:#3B4A32;text-decoration:underline;font-weight:700;padding:3px 0;">@return</span></div><div class="ln" style="left:-13px;top:738.8px;">58</div><div class="code" style="left:97px;top:738.8px;"><span class="dc">     */</span></div><div class="ln" style="left:-13px;top:761.8px;">59</div><div class="code" style="left:97px;top:761.8px;">    <span class="k">private void</span> <span class="md">setHiAi</span>() {</div><div class="ln" style="left:-13px;top:784.8px;">60</div><div class="ln" style="left:-13px;top:807.8px;">61</div><div class="ln" style="left:-13px;top:830.8px;">62</div><svg style="left:84px;top:53.5px" width="11" height="11" viewBox="0 0 11 11"><rect x="0.5" y="0.5" width="10" height="10" fill="#313335" stroke="#6E7072" stroke-width="1"/><path d="M3 5.5H8M5.5 3V8" stroke="#6E7072" stroke-width="1"/></svg><svg style="left:84px;top:307px" width="11" height="12" viewBox="0 0 11 12"><path d="M0.5 0.5H10.5V8L5.5 11.5L0.5 8Z" fill="#313335" stroke="#6E7072" stroke-width="1"/><path d="M3 5.5H8" stroke="#6E7072" stroke-width="1"/></svg><svg style="left:84px;top:445px" width="11" height="12" viewBox="0 0 11 12"><path d="M0.5 0.5H10.5V8L5.5 11.5L0.5 8Z" fill="#313335" stroke="#6E7072" stroke-width="1"/><path d="M3 5.5H8" stroke="#6E7072" stroke-width="1"/></svg><svg style="left:84px;top:514px" width="11" height="12" viewBox="0 0 11 12"><path d="M0.5 0.5H10.5V8L5.5 11.5L0.5 8Z" fill="#313335" stroke="#6E7072" stroke-width="1"/><path d="M3 5.5H8" stroke="#6E7072" stroke-width="1"/></svg><svg style="left:84px;top:652px" width="11" height="12" viewBox="0 0 11 12"><path d="M0.5 0.5H10.5V8L5.5 11.5L0.5 8Z" fill="#313335" stroke="#6E7072" stroke-width="1"/><path d="M3 5.5H8" stroke="#6E7072" stroke-width="1"/></svg><svg style="left:84px;top:767px" width="11" height="12" viewBox="0 0 11 12"><path d="M0.5 0.5H10.5V8L5.5 11.5L0.5 8Z" fill="#313335" stroke="#6E7072" stroke-width="1"/><path d="M3 5.5H8" stroke="#6E7072" stroke-width="1"/></svg><svg style="left:84px;top:398px" width="11" height="12" viewBox="0 0 11 12"><path d="M0.5 11.5H10.5V3.5L5.5 0.5L0.5 3.5Z" fill="#313335" stroke="#6E7072" stroke-width="1"/><path d="M3 7H8" stroke="#6E7072" stroke-width="1"/></svg><svg style="left:84px;top:490px" width="11" height="12" viewBox="0 0 11 12"><path d="M0.5 11.5H10.5V3.5L5.5 0.5L0.5 3.5Z" fill="#313335" stroke="#6E7072" stroke-width="1"/><path d="M3 7H8" stroke="#6E7072" stroke-width="1"/></svg><svg style="left:84px;top:605px" width="11" height="12" viewBox="0 0 11 12"><path d="M0.5 11.5H10.5V3.5L5.5 0.5L0.5 3.5Z" fill="#313335" stroke="#6E7072" stroke-width="1"/><path d="M3 7H8" stroke="#6E7072" stroke-width="1"/></svg><svg style="left:84px;top:743px" width="11" height="12" viewBox="0 0 11 12"><path d="M0.5 11.5H10.5V3.5L5.5 0.5L0.5 3.5Z" fill="#313335" stroke="#6E7072" stroke-width="1"/><path d="M3 7H8" stroke="#6E7072" stroke-width="1"/></svg><svg style="left:53px;top:94px" width="19" height="20" viewBox="0 0 19 20"><path d="M6 0H15V9H3V3Z" fill="#9AA7B0"/><path d="M3 3H6V0Z" fill="#313335"/><rect x="0" y="10" width="19" height="9.5" fill="#C75E2A"/><path d="M7 12L4.5 14.7L7 17.4M12 12L14.5 14.7L12 17.4" stroke="#3C2A20" stroke-width="1.2" fill="none"/></svg><svg style="left:38px;top:303px" width="16" height="16" viewBox="0 0 16 16"><circle cx="5" cy="7.5" r="5" fill="#4F9A48"/><path d="M5 5V10" stroke="#2B3A28" stroke-width="1.3"/><path d="M12 16V4" stroke="#D9534F" stroke-width="1.6"/><path d="M9 5L12 0L15 5Z" fill="#D9534F"/></svg><div class="a" style="left:1385px;top:3px;width:13px;height:13px;background:#C29522;"></div><div class="a" style="left:1382px;top:32px;width:18px;height:3px;background:#B8901E;"></div><div class="a" style="left:1382px;top:202px;width:18px;height:3px;background:#B8901E;"></div><div class="a" style="left:1382px;top:237px;width:18px;height:3px;background:#B8901E;"></div><div class="a" style="left:1382px;top:565px;width:18px;height:3px;background:#B8901E;"></div><div class="a" style="left:1382px;top:617px;width:18px;height:176px;background:#B8901E;"></div><div class="a" style="left:1388px;top:22px;width:11px;height:211px;background:rgba(255,255,255,0.13);"></div>
</div>
<div class="a" style="left:493px;top:944px;width:1400px;height:45px;background:#313335;border-top:1px solid #393B3D;"></div>
<div class="t" style="left:592px;top:958px;font-size:17px;color:#BBBBBB;font-weight:400;line-height:20px;">TableRecognitionActivity</div>
<svg style="left:790px;top:958px" width="6" height="17" viewBox="0 0 6 17"><path d="M0.5 0.5L5 8.5L0.5 16.5" stroke="#5E6163" stroke-width="1" fill="none"/></svg>
<div class="t" style="left:803px;top:958px;font-size:17px;color:#BBBBBB;font-weight:400;line-height:20px;">onClick()</div>
<div class="a" style="left:1893px;top:69px;width:1px;height:920px;background:#2F3133;"></div>
<svg style="left:1896px;top:82px" width="20" height="20" viewBox="0 0 20 20"><circle cx="10.5" cy="10" r="9" stroke="#B8B8B8" stroke-width="1.4" fill="none"/><path d="M10.5 3.8L15.5 6.6L10.5 9.4L5.5 6.6Z" fill="#0A7BFF"/><path d="M4.8 7.8L9.8 10.6V16.2L4.8 13.4Z" fill="#0A7BFF"/><path d="M16.2 7.8L11.2 10.6V16.2L16.2 13.4Z" fill="#0A7BFF"/></svg>
<div class="vtr" style="left:1914px;top:106px;">Kit Assistant</div>
<svg style="left:1898px;top:216px" width="14" height="11" viewBox="0 0 14 11"><path d="M0 11C0 5 2 1 7 0.5C10 0 13 1.5 14 3V11H11V8H5V11Z" fill="#AFB1B3"/></svg>
<div class="vtr" style="left:1914px;top:232px;">Gradle</div>
<svg style="left:1899px;top:823px" width="12" height="15" viewBox="0 0 12 15"><rect x="0.75" y="0.75" width="10.5" height="13.5" stroke="#AFB1B3" stroke-width="1.5" fill="none"/><rect x="0" y="11" width="12" height="4" fill="#AFB1B3"/></svg>
<div class="vtr" style="left:1914px;top:843px;"><span style="font-size:13.5px">Device File Explorer</span></div>
<div class="a" style="left:0;top:989px;width:1911px;height:1px;background:#2F3133;"></div>
<svg style="left:43px;top:995px" width="19" height="18" viewBox="0 0 19 18"><path d="M17 9V1.8H3" stroke="#C8C8C8" stroke-width="1.8" fill="none"/><path d="M0.5 1.8L4.5 -1.2V4.8Z" fill="#C8C8C8"/><path d="M1.5 9V15.2H14" stroke="#4AA3F0" stroke-width="1.8" fill="none"/><path d="M16.5 15.2L12.5 12.2V18.2Z" fill="#4AA3F0"/></svg>
<div class="t" style="left:66px;top:995px;font-size:15px;line-height:20px;">HMS Convertor</div>
<svg style="left:198px;top:997px" width="13" height="12" viewBox="0 0 13 12"><path d="M0 1H2M0 5H2M0 9H2M4 1H13M4 5H13M4 9H13" stroke="#AFB1B3" stroke-width="2"/></svg>
<div class="t" style="left:215px;top:995px;font-size:15px;line-height:20px;"><span class="u">6</span>: TODO</div>
<svg style="left:297px;top:996px" width="16" height="15" viewBox="0 0 16 15"><path d="M0 4L5 0L7 1.5L6 3L15.5 13L14 14.5L4.5 4.5L2 6Z" fill="#AFB1B3"/></svg>
<div class="t" style="left:317px;top:995px;font-size:15px;line-height:20px;">Build</div>
<svg style="left:375px;top:998px" width="14" height="11" viewBox="0 0 14 11"><path d="M0 1H14M0 5H9M0 9H14" stroke="#AFB1B3" stroke-width="2"/></svg>
<div class="t" style="left:395px;top:995px;font-size:15px;line-height:20px;">Logcat</div>
<svg style="left:466px;top:997px" width="14" height="13" viewBox="0 0 14 13"><rect x="0" y="0" width="14" height="13" fill="#AFB1B3"/><path d="M2.5 3L5.5 5.5L2.5 8M6 9.5H10" stroke="#3C3F41" stroke-width="1.2" fill="none"/></svg>
<div class="t" style="left:485px;top:995px;font-size:15px;line-height:20px;">Terminal</div>
<svg style="left:1794px;top:996px" width="16" height="16" viewBox="0 0 16 16"><path d="M8 0A8 8 0 1 0 8 16H16V8A8 8 0 0 0 8 0Z" fill="#EDA73A"/><text x="7.5" y="12.5" text-anchor="middle" font-family="Liberation Sans" font-weight="700" font-size="12" fill="#2B2B2B">2</text></svg>
<div class="t" style="left:1814px;top:995px;font-size:15px;line-height:20px;letter-spacing:-0.4px;">Event Log</div>
<div class="a" style="left:0;top:1017px;width:1911px;height:1px;background:#494C4E;"></div>
<svg style="left:7px;top:1021px" width="16" height="14" viewBox="0 0 16 14"><rect x="0" y="3" width="2" height="11" fill="#9EA0A2"/><rect x="3.75" y="0.75" width="11.5" height="13" stroke="#AFB1B3" stroke-width="1.5" fill="none"/></svg>
<div class="t" style="left:34px;top:1020px;font-size:17px;color:#BBBBBB;font-weight:400;line-height:20px;letter-spacing:0.13px;">Dependency package group: 'com.huawei.hiai.hiai-engine', name: 'huawei-hiai-vision', version: '10.0.4.306', ext: 'aar' has been imported into build.gradle of module:app (6 minutes ago)</div>
<div class="t" style="left:1603px;top:1020px;font-size:17px;color:#BBBBBB;font-weight:400;line-height:20px;transform:scaleX(0.89);transform-origin:0 0;">105:21</div>
<div class="t" style="left:1667px;top:1020px;font-size:17px;color:#BBBBBB;font-weight:400;line-height:20px;transform:scaleX(0.83);transform-origin:0 0;">CRLF</div>
<div class="t" style="left:1721px;top:1020px;font-size:17px;color:#BBBBBB;font-weight:400;line-height:20px;transform:scaleX(0.93);transform-origin:0 0;">UTF-8</div>
<div class="t" style="left:1783px;top:1020px;font-size:17px;color:#BBBBBB;font-weight:400;line-height:20px;transform:scaleX(0.94);transform-origin:0 0;">4 spaces</div>
<svg style="left:1861px;top:1019px" width="14" height="15" viewBox="0 0 14 15"><path d="M2 6V3.5A3 3 0 0 1 8 3.5" stroke="#AFB1B3" stroke-width="1.6" fill="none"/><rect x="5" y="7" width="9" height="8" fill="#AFB1B3"/></svg>
<svg style="left:1888px;top:1019px" width="18" height="15" viewBox="0 0 18 15"><path d="M4 5L5 0H13L14 5Z" fill="#AFB1B3"/><rect x="0" y="5" width="18" height="2" fill="#AFB1B3"/><path d="M3 8H15V11C15 13 12 15 9 15C6 15 3 13 3 11Z" fill="#AFB1B3"/><circle cx="6.5" cy="10" r="1.2" fill="#3C3F41"/><circle cx="11.5" cy="10" r="1.2" fill="#3C3F41"/></svg>
</body></html>
